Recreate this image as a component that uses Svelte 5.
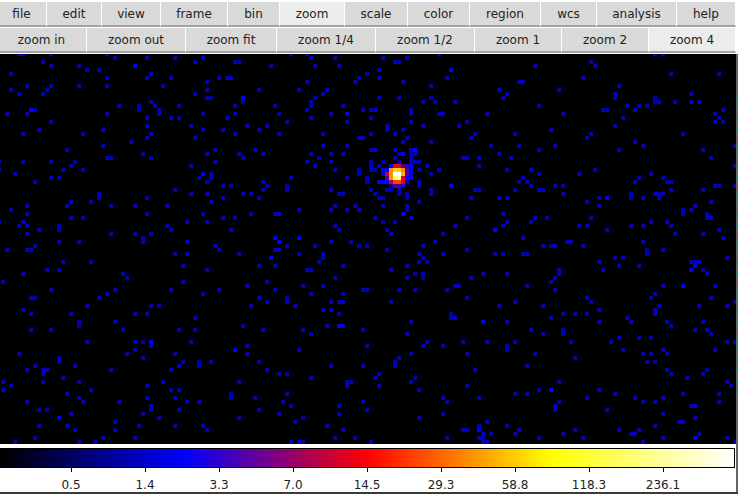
<script>
    const menus = ['file', 'edit', 'view', 'frame', 'bin', 'zoom', 'scale', 'color', 'region', 'wcs', 'analysis', 'help']
    const zooms = ['zoom in', 'zoom out', 'zoom fit', 'zoom 1/4', 'zoom 1/2', 'zoom 1', 'zoom 2', 'zoom 4']
    const ticks = ['0.5', '1.4', '3.3', '7.0', '14.5', '29.3', '58.8', '118.3', '236.1']

    // photon counts: row -> columns that hold a single count
    const counts = {
        '-1': [4, 5, 12, 26, 72, 76, 109, 163, 165],
        0: [28, 36, 43, 50, 77, 83, 95, 101],
        1: [10, 48, 58, 59, 98, 99, 147],
        2: [12, 19, 67, 78, 84, 133, 148],
        3: [21, 24, 94],
        4: [2, 37, 91, 167, 179],
        5: [26, 36, 42, 54, 56, 57, 89, 94, 111, 145],
        6: [51, 76, 88, 100, 129, 130],
        7: [6, 12, 19, 26, 40, 107, 154],
        8: [2, 11, 51, 64, 74, 81, 124, 139],
        9: [4, 10, 48, 80, 126, 153, 172],
        10: [51, 52, 78, 94, 99, 107, 125, 153, 163],
        11: [37, 60, 77, 105, 108, 113, 163, 164, 168, 172, 174],
        12: [29, 34, 38, 44, 58, 68, 77, 85, 134, 156, 159, 161],
        13: [8, 34, 39, 76, 90, 92, 93, 102, 150, 151, 158, 180],
        14: [1, 6, 26, 39, 50, 58, 69, 82, 102, 109, 110, 121, 140, 178],
        15: [36, 42, 44, 56, 77, 92, 155, 179],
        16: [12, 71, 86, 102, 116, 178, 180],
        17: [36, 47, 61, 66, 96, 105, 114, 153],
        18: [9, 25, 50, 55, 64, 96, 100, 137],
        19: [5, 20, 37, 58, 69, 80, 92, 98, 118, 128, 147, 170],
        20: [36, 48, 89, 90, 101, 117, 146],
        21: [32, 100, 107, 158],
        22: [25, 80, 86, 122, 129, 138, 160, 183],
        23: [16, 53, 63, 92, 93, 98, 102, 134, 154, 175],
        24: [35, 51, 59, 65, 77, 82, 85, 99, 102, 103, 124],
        25: [26, 27, 37, 60, 79, 98, 102, 115, 116, 119, 127, 177],
        26: [-1, 5, 12, 18, 53, 76, 82, 92, 95, 99, 102, 103, 104],
        27: [17, 47, 78, 92, 94, 106, 119, 183],
        28: [-1, 15, 20, 83, 89, 92, 93, 104, 109, 126, 132, 148],
        29: [3, 52, 89, 107, 134, 144, 162],
        30: [12, 14, 49, 52, 72, 86, 91, 130, 159, 165],
        31: [8, 51, 65, 91, 104, 129, 131, 158, 166, 167],
        32: [55, 57, 66, 71, 104, 132, 138, 140, 178, 179, 183],
        33: [43, 65, 71, 82, 92, 96, 97, 99, 107, 118, 119, 128, 134, 135, 167, 175],
        34: [24, 47, 51, 60, 62, 84, 85, 93, 99, 101, 107, 140, 157, 163, 164, 165],
        35: [24, 36, 55, 64, 94, 95, 101, 117, 124, 126, 149, 157, 160, 164],
        36: [17, 22, 52, 104, 146, 177],
        37: [6, 16, 27, 33, 41, 83, 88, 95, 101, 149, 173],
        38: [2, 74, 82, 86, 89, 101, 170, 172],
        39: [6, 36, 50, 62, 68, 69, 125, 170, 176],
        40: [17, 20, 55, 58, 93, 102, 116, 133, 136, 147, 176, 177],
        41: [-1, 5, 46, 51, 95, 98, 126, 132, 162, 166],
        42: [4, 6, 14, 41, 83, 113, 125, 144, 146, 157, 160, 167],
        43: [9, 14, 42, 57, 84, 96, 151, 179],
        44: [6, 27, 33, 37, 97, 110, 168, 175],
        45: [35, 130, 180],
        46: [14, 19, 35, 46, 69, 82, 87, 108, 141, 142, 160],
        47: [8, 53, 71, 78, 89, 91, 105, 135, 137, 138, 145],
        48: [1, 6, 7, 54, 68, 69, 96, 116, 161, 165],
        49: [43, 46, 59, 74, 80, 104, 110, 123, 125, 130, 131, 161],
        50: [80, 105, 153, 155, 181],
        51: [15, 22, 79, 104, 106, 149, 172, 173, 174],
        52: [45, 64, 68, 85, 101, 154, 159],
        53: [11, 14, 51, 76, 77, 97, 139, 150, 175],
        54: [5, 30, 103, 105, 120, 126, 139, 176],
        55: [31, 83, 101, 105, 117, 138],
        56: [0, 45, 66, 137],
        57: [61, 75, 80, 113, 114, 131, 165, 178],
        58: [12, 28, 42, 54, 68, 90, 91, 99, 103, 111, 138],
        59: [26, 50, 77, 85, 163],
        60: [7, 8, 24, 64, 71, 116, 146, 162, 177],
        61: [66, 71, 82, 84, 85, 97, 128, 147, 183],
        62: [21, 37, 39, 62, 73, 124, 135, 164, 174, 181],
        63: [5, 80, 82, 149, 163],
        64: [7, 17, 33, 36, 84, 112, 140, 143, 146, 163],
        65: [48, 112, 113, 137, 156],
        66: [19, 28, 102, 126, 149, 157, 166, 175],
        67: [19, 60, 81, 85, 167],
        68: [7, 12, 30, 44, 48, 65, 75, 90, 132, 140, 173, 176],
        69: [77, 101, 135, 140, 177],
        70: [154, 159, 162],
        71: [21, 33, 35, 47, 106, 115, 121, 128, 142, 152, 181, 183],
        72: [37, 61, 91, 105, 110, 126],
        73: [33, 74, 126, 155, 165, 178],
        74: [4, 31, 43, 61, 102, 116, 133, 160, 162, 166],
        75: [14, 35, 99, 143],
        76: [14, 45, 49, 52, 64, 98, 161, 163],
        77: [8, 18, 44, 49, 82, 90, 98, 131],
        78: [6, 10, 11, 27, 42, 66, 118, 166, 176],
        79: [10, 69, 71, 94, 167, 175],
        80: [15, 77, 93, 103, 171],
        81: [0, 10, 19, 40, 59, 86, 87, 102, 139, 181],
        82: [2, 36, 86, 94, 116, 182],
        83: [0, 22, 42, 44, 104, 134, 149],
        84: [16, 57, 71, 128, 131, 153, 170, 179],
        85: [19, 36, 43, 57, 63, 110, 119, 146, 158, 165],
        86: [6, 20, 29, 46, 49, 70, 90, 111, 139, 160, 163, 179],
        87: [37, 72, 84, 138, 172, 173],
        88: [9, 11, 37, 44, 64, 91, 138, 151],
        89: [17, 35, 69, 84, 110, 165],
        90: [39, 59, 75, 104, 173],
        91: [28, 73, 121, 169, 170],
        92: [9, 16, 34, 43, 50, 81, 119, 126, 163],
        93: [18, 28, 51, 85, 115, 116, 129, 143, 154, 159],
        94: [120, 122, 128, 140, 157, 158, 174],
        95: [8, 25, 33, 83, 88, 111, 119, 120, 134, 145, 165, 181],
        96: [3, 19, 23, 72, 74, 75, 92, 120, 121, 160, 183]
    }

    // [col, row] pixels holding two counts
    const brighter = [[33, 2], [7, 13], [50, 29], [60, 10], [86, 14], [112, 3], [103, 23], [100, 24], [112, 32], [100, 39], [68, 45], [74, 45], [69, 46], [151, 35], [123, 43], [67, 50], [120, 66], [84, 67], [37, 71], [58, 73], [14, 90], [119, 93], [173, 52], [172, 53], [170, 57], [137, 83], [173, 95]]

    // the source itself, [row, first column, colours...]
    const source = [
        [27, 97, '#0000ff', '#e0001f', '#e0001f', '#50007f', '#2000c0', '#0000ff'],
        [28, 95, '#0000ff', '#0000ff', '#ff8c00', '#ffe000', '#ffd000', '#ff8c00', '#5000a0', '#0000ff'],
        [29, 95, '#0000d8', '#c00040', '#ff9000', '#ffffff', '#ffffff', '#ffb000', '#5000a0', '#0000e0'],
        [30, 96, '#600090', '#ff9000', '#ffff80', '#ffff80', '#e00020', '#0000ff', '#0000ff'],
        [31, 94, '#0000ff', '#0000ff', '#0000ff', '#c00040', '#ff4000', '#ff4000', '#e80010', '#0000c0'],
        [32, 97, '#0000a0', '#500090', '#500090', '#0000e0']
    ]

    function cell(c, r) {
        return `M${1 + 4 * c} ${2 + 4 * r}h4v4h-4z`
    }

    let dim = ''
    for (const r in counts) {
        for (const c of counts[r]) dim += cell(c, +r)
    }
    const bright = brighter.map(([c, r]) => cell(c, r)).join('')

    const hot = source.flatMap(([r, c, ...cols]) => cols.map((fill, i) => ({ d: cell(c + i, r), fill })))

    // neighbouring window peeking in at the right edge
    const greens = [96, 104, 120, 128, 144, 152, 168, 176, 192, 200, 216, 224, 240, 248, 264, 272, 288, 297, 312, 321, 336, 345, 357, 369, 381, 392]
</script>

<div class="win">
    <div class="main">
        <div class="row menus">
            {#each menus as m}
                <div class="btn" class:on={m === 'zoom'}>{m}</div>
            {/each}
        </div>
        <div class="row zooms">
            {#each zooms as z}
                <div class="btn" class:on={z === 'zoom 4'}>{z}</div>
            {/each}
        </div>
        <svg class="image" width="738" height="390" viewBox="0 0 738 390" shape-rendering="crispEdges">
            <rect width="738" height="390" fill="#000" />
            <path d={dim} fill="#0000b8" />
            <path d={bright} fill="#0000ff" />
            {#each hot as h}
                <path d={h.d} fill={h.fill} />
            {/each}
        </svg>
        <div class="cbar">
            <div class="ramp"></div>
            <div class="ticks">
                {#each ticks as t}
                    <div class="tick"><span class="mark"></span>{t}</div>
                {/each}
            </div>
        </div>
    </div>
    <svg class="edge" width="2" height="440" viewBox="0 0 2 440" shape-rendering="crispEdges">
        <rect width="2" height="440" fill="#666" />
        {#each greens as y}
            <rect x="0" y={y - 54} width="2" height="2" fill="#00a060" />
        {/each}
    </svg>
</div>

<style>
    :global(body) {
        margin: 0;
        background: #fff;
    }
    .win {
        position: relative;
        width: 738px;
        height: 494px;
        overflow: hidden;
        font-family: "DejaVu Sans", sans-serif;
        font-size: 12px;
        color: #222;
        background: #fff;
        border-bottom: 2px solid #3a3a38;
        box-sizing: border-box;
    }
    .main {
        width: 736px;
    }
    .row {
        display: grid;
        margin-top: 2px;
        height: 25px;
    }
    .row + .row {
        margin-top: 1px;
    }
    .menus {
        grid-template-columns: 47px 55px 59px 67px 52px 65px 63px 62px 71px 56px 80px 59px;
    }
    .zooms {
        grid-template-columns: 87px 99px 91px 99px 99px 87px 87px 87px;
    }
    .btn {
        display: flex;
        align-items: center;
        justify-content: center;
        background: #d9d9d9;
        border-right: 1px solid #fff;
        border-bottom: 2px solid #a3a3a3;
        box-sizing: border-box;
    }
    /* the first button sits partly off the left edge */
    .btn:first-child {
        padding-right: 3px;
    }
    .btn.on {
        background: #ececec;
    }
    .image {
        display: block;
        margin-top: 1px;
    }
    .cbar {
        width: 735px;
        padding-top: 4px;
    }
    .ramp {
        height: 18px;
        border: 1px solid #000;
        background: linear-gradient(to right, #000, #00f 25%, #f00 50%, #ff0 75%, #fff);
    }
    .ticks {
        display: flex;
        padding-left: 34px;
    }
    .tick {
        position: relative;
        width: 74px;
        height: 24px;
        padding-top: 10px;
        box-sizing: border-box;
        text-align: center;
        line-height: 15px;
    }
    .mark {
        position: absolute;
        top: 0;
        left: 37px;
        width: 1px;
        height: 4px;
        background: #000;
    }
    .edge {
        position: absolute;
        top: 54px;
        right: 0;
    }
</style>
